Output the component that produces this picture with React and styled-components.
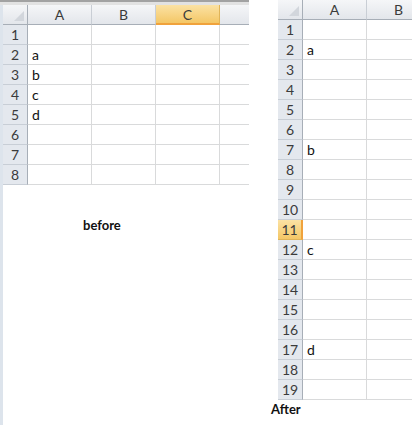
import React from 'react'
import styled, { createGlobalStyle } from 'styled-components';

const GlobalStyle = createGlobalStyle`
    html, body {
        margin: 0;
        padding: 0;
        background: #ffffff;
    }
    * {
        box-sizing: border-box;
    }
`

const Page = styled.div`
    display: flex;
    width: 412px;
    height: 425px;
    overflow: hidden;
    font-family: Lato, "Open Sans", sans-serif;
`

const LeftPane = styled.div`
    width: 249px;
    flex-shrink: 0;
    display: flex;
    flex-direction: column;
    overflow: hidden;
`

const TopBar = styled.div`
    height: 5px;
    border-top: 2px solid #a2a2a2;
    background: #e2e2e2;
`

const LeftBody = styled.div`
    flex: 1;
    display: flex;
`

const Strip = styled.div`
    width: 3px;
    flex-shrink: 0;
    background: #dde4ec;
`

const LeftMain = styled.div`
    flex: 1;
    min-width: 0;
    display: flex;
    flex-direction: column;
    overflow: hidden;
`

const RightPane = styled.div`
    margin-left: 21px;
    width: 142px;
    flex-shrink: 0;
    display: flex;
    flex-direction: column;
    overflow: hidden;
`

const Sheet = styled.div`
    display: grid;
    grid-template-columns: ${p => p.$cols};
    grid-auto-rows: 20px;
    margin-left: ${p => p.$offset || 0}px;
    font-size: 14px;
`

const Corner = styled.div`
    position: relative;
    background: linear-gradient(#f5f6f8, #e3e6eb);
    border-right: 1px solid #a7aeb7;
    border-bottom: 1px solid #a7aeb7;

    svg {
        position: absolute;
        right: 3px;
        bottom: 3px;
    }
`

const ColHeader = styled.div`
    display: flex;
    align-items: center;
    justify-content: center;
    color: #3b3b3b;
    background: ${p => p.$selected
        ? 'linear-gradient(#fbe2a4, #f4c766)'
        : 'linear-gradient(#f5f6f8, #e3e6eb)'};
    border-right: 1px solid ${p => p.$selected ? '#e0b458' : '#c9ced5'};
    border-bottom: ${p => p.$selected ? '2px solid #f0a23c' : '1px solid #a7aeb7'};
`

const RowHeader = styled.div`
    display: flex;
    align-items: flex-end;
    justify-content: center;
    padding-bottom: 1px;
    color: #3b3b3b;
    background: ${p => p.$selected
        ? 'linear-gradient(#fbe2a4, #f4c766)'
        : '#e4e8ee'};
    border-right: ${p => p.$selected ? '2px solid #f0a23c' : '1px solid #a7aeb7'};
    border-bottom: 1px solid ${p => p.$selected ? '#e0b458' : '#c8ced6'};
`

const Cell = styled.div`
    display: flex;
    align-items: flex-end;
    padding: 0 0 1px 4px;
    color: #111;
    border-right: 1px solid #d9dadb;
    border-bottom: 1px solid #d9dadb;
`

const Caption = styled.div`
    font-weight: 700;
    font-size: 13px;
    line-height: 16px;
    color: #111;
    margin-top: ${p => p.$top}px;
    padding-left: ${p => p.$left}px;
`

const CornerMark = () => (
    <svg width="10" height="10" viewBox="0 0 10 10">
        <polygon points="10,0 10,10 0,10" fill="#d2d6dc" />
    </svg>
)

const SheetView = ({ cols, letters, rows, values, selCol, selRow, offset }) => (
    <Sheet $cols={cols} $offset={offset}>
        <Corner><CornerMark /></Corner>
        {letters.map((l, i) => (
            <ColHeader key={i} $selected={l === selCol}>{l}</ColHeader>
        ))}
        {Array.from({ length: rows }, (_, r) => (
            <React.Fragment key={r}>
                <RowHeader $selected={r + 1 === selRow}>{r + 1}</RowHeader>
                {letters.map((l, i) => (
                    <Cell key={i}>{i === 0 ? values[r + 1] : ''}</Cell>
                ))}
            </React.Fragment>
        ))}
    </Sheet>
)

export default function App() {
    return (
        <Page>
            <GlobalStyle />
            <LeftPane>
                <TopBar />
                <LeftBody>
                    <Strip />
                    <LeftMain>
                        <SheetView
                            cols="25px 64px 64px 64px 64px"
                            letters={['A', 'B', 'C', '']}
                            rows={8}
                            values={{ 2: 'a', 3: 'b', 4: 'c', 5: 'd' }}
                            selCol="C"
                        />
                        <Caption $top={32} $left={80}>before</Caption>
                    </LeftMain>
                </LeftBody>
            </LeftPane>
            <RightPane>
                <SheetView
                    cols="25px 64px 64px"
                    letters={['A', 'B']}
                    rows={19}
                    values={{ 2: 'a', 7: 'b', 12: 'c', 17: 'd' }}
                    selRow={11}
                    offset={8}
                />
                <Caption $top={1} $left={1}>After</Caption>
            </RightPane>
        </Page>
    )
}
